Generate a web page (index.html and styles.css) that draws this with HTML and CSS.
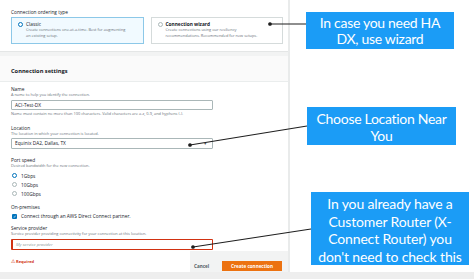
FILE: index.html
```html
<!DOCTYPE html>
<html>
<head>
    <title>Direct Connect - Create connection</title>
    <link rel="stylesheet" href="styles.css">
</head>
<body>
<div class="stage">
    <div class="main">
        <div class="console">
            <section class="panel panel-top">
                <div class="label">Connection ordering type</div>
                <div class="tiles">
                    <div class="tile tile-on">
                        <span class="radio radio-on"></span>
                        <div>
                            <div class="tile-title">Classic</div>
                            <div class="tile-desc">Create connections one-at-a-time. Best for augmenting<br>an existing setup.</div>
                        </div>
                    </div>
                    <div class="tile">
                        <span class="radio"></span>
                        <div>
                            <div class="tile-title strong">Connection wizard</div>
                            <div class="tile-desc">Create connections using our resiliency<br>recommendations. Recommended for new setups.</div>
                        </div>
                    </div>
                </div>
            </section>

            <section class="panel panel-settings">
                <header class="panel-head">Connection settings</header>
                <div class="panel-body">
                    <div class="label">Name</div>
                    <div class="desc">A name to help you identify the connection.</div>
                    <div class="input">ACI-Test-DX</div>
                    <div class="desc hint">Name must contain no more than 100 characters. Valid characters are a-z, 0-9, and hyphens (-).</div>

                    <div class="label gap">Location</div>
                    <div class="desc tight">The location in which your connection is located.</div>
                    <div class="input select">
                        <span>Equinix DA2, Dallas, TX</span>
                        <span class="caret">&#9660;</span>
                    </div>

                    <div class="label gap">Port speed</div>
                    <div class="desc">Desired bandwidth for the new connection.</div>
                    <div class="options">
                        <div class="option"><span class="radio radio-on"></span>1Gbps</div>
                        <div class="option"><span class="radio"></span>10Gbps</div>
                        <div class="option"><span class="radio"></span>100Gbps</div>
                    </div>

                    <div class="label gap-sm">On-premises</div>
                    <div class="option check-row"><span class="checkbox">&#10003;</span>Connect through an AWS Direct Connect partner.</div>

                    <div class="label gap-xs">Service provider</div>
                    <div class="desc">Service provider providing connectivity for your connection at this location.</div>
                    <div class="input input-error">My service provider</div>
                </div>
                <div class="panel-foot">
                    <div class="error"><span class="warn">&#9888;</span> Required</div>
                    <div class="actions">
                        <span class="btn-link">Cancel</span>
                        <span class="btn-primary">Create connection</span>
                    </div>
                </div>
            </section>
        </div>
    </div>
    <div class="band"></div>

    <svg class="arrows" width="474" height="279" viewBox="0 0 474 279">
        <g stroke="#1f1f1f" stroke-width="1.1" fill="#1f1f1f">
            <line x1="270" y1="24" x2="306" y2="24"/>
            <circle cx="270" cy="24" r="1.3"/>
            <line x1="190" y1="145" x2="307" y2="126"/>
            <circle cx="190" cy="145" r="1.3"/>
            <line x1="193" y1="247" x2="311" y2="229"/>
            <circle cx="193" cy="247" r="1.3"/>
        </g>
    </svg>

    <div class="callout callout-wizard">In case you need HA<br>DX, use wizard</div>
    <div class="callout callout-location">Choose Location Near<br>You</div>
    <div class="callout callout-router">In you already have a<br>Customer Router (X-<br>Connect Router) you<br>don't need to check this</div>
</div>
</body>
</html>
```

FILE: styles.css
```css
body {
    margin: 0;
    background: #ffffff;
    font-family: 'Open Sans', 'Noto Sans', sans-serif;
    color: #16191f;
}

.stage {
    position: relative;
    width: 474px;
    height: 279px;
    overflow: hidden;
    display: flex;
    flex-direction: column;
}

.main {
    height: 272px;
    display: flex;
}

.band {
    height: 7px;
    background: #eeeeee;
}

/* console column */
.console {
    width: 288px;
    background: #f2f3f3;
    border-right: 2px solid #e9ebeb;
    display: flex;
    flex-direction: column;
}

.panel {
    background: #ffffff;
}

.panel-top {
    height: 52px;
    box-sizing: border-box;
    padding: 9px 5px 0 11px;
    border-bottom: 1px solid #e4e6e6;
}

.label {
    font-size: 4.8px;
    line-height: 6px;
    color: #16191f;
    white-space: nowrap;
}

.tiles {
    display: flex;
    gap: 7px;
    margin-top: 2px;
}

.tile {
    flex: 1;
    height: 27px;
    box-sizing: border-box;
    border: 1px solid #d5dbdb;
    padding: 3px 4px 0 6px;
    display: flex;
    align-items: flex-start;
    gap: 3px;
}

.tile-on {
    background: #f1faff;
    border-color: #8cc8e8;
}

.tile .radio {
    margin-top: 1px;
}

.tile-title {
    font-size: 4.8px;
    line-height: 6px;
}

.strong {
    font-weight: 700;
}

.tile-desc {
    font-size: 3.9px;
    line-height: 6px;
    color: #687078;
    white-space: nowrap;
}

.radio {
    flex: none;
    width: 5px;
    height: 5px;
    box-sizing: border-box;
    border-radius: 50%;
    border: 1px solid #aab7b8;
    background: #ffffff;
}

.radio-on {
    border: 1.6px solid #0073bb;
}

/* settings panel */
.panel-settings {
    margin-top: 4px;
    flex: 1;
    display: flex;
    flex-direction: column;
}

.panel-head {
    height: 26px;
    box-sizing: border-box;
    padding: 11px 11px 0;
    background: #fafafa;
    border-bottom: 1px solid #eaeded;
    font-size: 5.7px;
    line-height: 8px;
    font-weight: 700;
}

.panel-body {
    padding: 4px 11px 0;
}

.desc {
    font-size: 3.9px;
    line-height: 6px;
    color: #687078;
    white-space: nowrap;
}

.desc.tight {
    line-height: 5px;
}

.hint {
    margin-top: 1px;
}

.gap {
    margin-top: 8px;
}

.gap-sm {
    margin-top: 6px;
}

.gap-xs {
    margin-top: 5px;
}

.input {
    width: 202px;
    height: 10px;
    box-sizing: border-box;
    margin-top: 2px;
    border: 1px solid #aab7b8;
    border-radius: 1px;
    padding: 0 3px;
    font-size: 4.8px;
    line-height: 8px;
    color: #16191f;
}

.select {
    height: 11px;
    line-height: 9px;
    display: flex;
    justify-content: space-between;
}

.caret {
    font-size: 3.5px;
    color: #545b64;
    padding-right: 2px;
}

.input-error {
    height: 11px;
    line-height: 9px;
    border-color: #d13212;
    border-left-width: 2px;
    color: #879596;
    font-style: italic;
    font-size: 4.3px;
}

.options {
    margin-top: 2px;
}

.option {
    height: 9px;
    display: flex;
    align-items: center;
    gap: 4px;
    padding-left: 1px;
    font-size: 4.8px;
}

.check-row {
    height: 8px;
    margin-top: 2px;
}

.checkbox {
    width: 5px;
    height: 5px;
    background: #0073bb;
    color: #ffffff;
    font-size: 4px;
    line-height: 5px;
    text-align: center;
    border-radius: 1px;
}

.panel-foot {
    flex: 1;
    margin-top: 1px;
    display: flex;
}

.error {
    flex: 1;
    padding: 7px 0 0 11px;
    font-size: 4px;
    line-height: 6px;
    font-weight: 700;
    color: #d13212;
}

.warn {
    font-size: 5px;
    font-weight: 400;
}

.actions {
    width: 98px;
    background: #f2f3f3;
    display: flex;
    align-items: flex-end;
    justify-content: space-between;
    padding: 0 6px 1px 4px;
    box-sizing: border-box;
}

.btn-link {
    font-size: 4.6px;
    line-height: 10px;
    color: #545b64;
    font-weight: 700;
}

.btn-primary {
    width: 60px;
    height: 10px;
    background: #ec7211;
    color: #ffffff;
    font-size: 4.6px;
    line-height: 10px;
    font-weight: 700;
    text-align: center;
}

/* annotations */
.arrows {
    position: absolute;
    left: 0;
    top: 0;
}

.callout {
    position: absolute;
    box-sizing: border-box;
    background: #1b9cf6;
    color: #ffffff;
    font-family: 'Lato', 'Open Sans', sans-serif;
    text-align: center;
    white-space: nowrap;
}

.callout-wizard {
    left: 306px;
    top: 12px;
    width: 148px;
    height: 37px;
    padding-top: 3px;
    font-size: 14px;
    letter-spacing: -0.3px;
    line-height: 16px;
}

.callout-location {
    left: 307px;
    top: 107px;
    width: 149px;
    height: 38px;
    padding-top: 3px;
    font-size: 14px;
    letter-spacing: -0.3px;
    line-height: 17px;
}

.callout-router {
    left: 311px;
    top: 192px;
    width: 158px;
    height: 73px;
    padding-top: 3px;
    font-size: 14px;
    letter-spacing: -0.15px;
    line-height: 17.5px;
}
```
